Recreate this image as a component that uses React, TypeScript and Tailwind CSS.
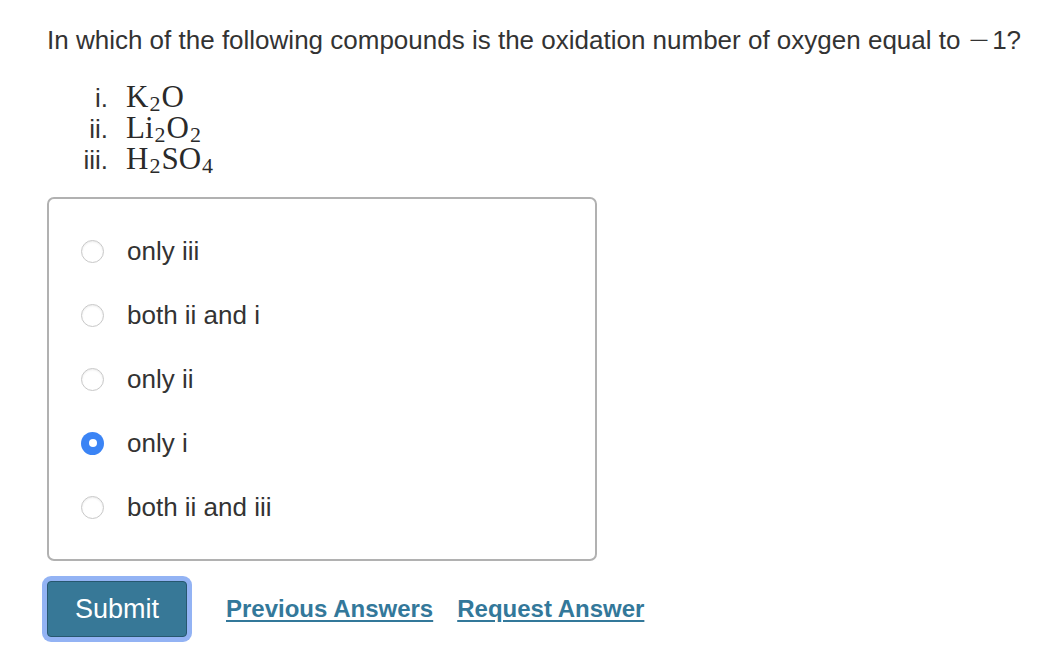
const options = [
  { label: "only iii", checked: false },
  { label: "both ii and i", checked: false },
  { label: "only ii", checked: false },
  { label: "only i", checked: true },
  { label: "both ii and iii", checked: false },
];

function Radio({ checked }: { checked: boolean }) {
  if (checked) {
    return (
      <span className="flex h-[23px] w-[23px] items-center justify-center rounded-full bg-[#3b84f5]">
        <span className="h-[8px] w-[8px] rounded-full bg-white" />
      </span>
    );
  }
  return (
    <span className="h-[23px] w-[23px] rounded-full border border-[#c8c8c8] bg-white shadow-[inset_0_1px_2px_rgba(0,0,0,0.08)]" />
  );
}

function Formula({ n, children }: { n: string; children: React.ReactNode }) {
  return (
    <div className="flex h-[31px] items-baseline leading-[31px]">
      <span className="w-[61px] text-right text-[26px] text-[#333]">{n}</span>
      <span className="ml-[18px] font-['Liberation_Serif',serif] text-[31px] text-[#2a2a2a]">
        {children}
      </span>
    </div>
  );
}

function Sub({ children }: { children: React.ReactNode }) {
  return (
    <span className="relative top-[4px] mx-[1px] inline-block text-[22px] leading-none">
      {children}
    </span>
  );
}

export default function App() {
  return (
    <div className="h-[658px] w-[1061px] bg-white font-['Liberation_Sans',Arial,sans-serif] text-[#333]">
      <div className="pl-[47px] pt-[25px]">
        <p className="text-[26px] leading-[30px]">
          In which of the following compounds is the oxidation number of oxygen equal to
          <span className="ml-[12px] mr-[5px] inline-block scale-x-[1.4] font-['Liberation_Serif',serif]">−</span>1?
        </p>
        <div className="mt-[25px]">
          <Formula n="i.">
            K<Sub>2</Sub>O
          </Formula>
          <Formula n="ii.">
            Li<Sub>2</Sub>O<Sub>2</Sub>
          </Formula>
          <Formula n="iii.">
            H<Sub>2</Sub>SO<Sub>4</Sub>
          </Formula>
        </div>

        <div className="mt-[23px] w-[550px] rounded-[7px] border-2 border-[#b1b1b1] pb-[20px] pt-[20px]">
          {options.map((o) => (
            <label key={o.label} className="flex h-[64px] items-center">
              <span className="ml-[32px] flex w-[46px]">
                <Radio checked={o.checked} />
              </span>
              <span className="text-[26px]">{o.label}</span>
            </label>
          ))}
        </div>

        <div className="-ml-[5px] mt-[15px] flex items-center">
          <div className="rounded-[9px] bg-[#93b3f4] p-[5px]">
            <button className="flex h-[56px] w-[140px] items-center justify-center rounded-[4px] border border-[#27586f] bg-[#377897] text-[27px] text-white">
              Submit
            </button>
          </div>
          <a className="ml-[34px] text-[24px] font-bold text-[#33789a] underline underline-offset-[3px]">
            Previous Answers
          </a>
          <a className="ml-[24px] text-[24px] font-bold text-[#33789a] underline underline-offset-[3px]">
            Request Answer
          </a>
        </div>
      </div>
    </div>
  );
}
